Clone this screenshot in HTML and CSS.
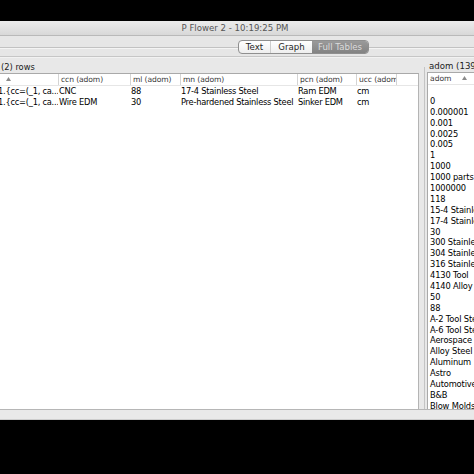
FILE: index.html
```html
<!DOCTYPE html>
<html lang="en">
<head>
  <meta charset="UTF-8">
  <meta name="viewport" content="width=device-width, initial-scale=1.0">
  <title>P Flower 2</title>
  <link rel="stylesheet" href="styles.css">
</head>
<body>
  <div class="window">
    <div class="titlebar">P Flower 2 - 10:19:25 PM</div>

    <div class="toolbar">
      <div class="segmented">
        <span class="seg seg-text">Text</span>
        <span class="seg seg-graph">Graph</span>
        <span class="seg seg-tables active">Full Tables</span>
      </div>
    </div>

    <div class="content">
      <section class="group left-group">
        <div class="group-title">(2) rows</div>
        <div class="table">
          <div class="row head">
            <span class="cell first"><svg class="arrow" width="5" height="4" viewBox="0 0 5 4"><path d="M2.5 0 L5 4 L0 4 Z" fill="#8a8a8a"/></svg></span>
            <span class="cell">ccn (adom)</span>
            <span class="cell">ml (adom)</span>
            <span class="cell">mn (adom)</span>
            <span class="cell">pcn (adom)</span>
            <span class="cell">ucc (adom)</span>
            <span class="cell"></span>
          </div>
          <div class="row">
            <span class="cell first">1.{cc=(_1, ca...</span>
            <span class="cell">CNC</span>
            <span class="cell">88</span>
            <span class="cell">17-4 Stainless Steel</span>
            <span class="cell">Ram EDM</span>
            <span class="cell">cm</span>
            <span class="cell"></span>
          </div>
          <div class="row">
            <span class="cell first">1.{cc=(_1, ca...</span>
            <span class="cell">Wire EDM</span>
            <span class="cell">30</span>
            <span class="cell">Pre-hardened Stainless Steel</span>
            <span class="cell">Sinker EDM</span>
            <span class="cell">cm</span>
            <span class="cell"></span>
          </div>
        </div>
      </section>

      <section class="group right-group">
        <div class="group-title">adom (1391)</div>
        <div class="list">
          <div class="list-head">adom <svg class="arrow" width="5" height="4" viewBox="0 0 5 4"><path d="M2.5 0 L5 4 L0 4 Z" fill="#8a8a8a"/></svg></div>
          <div class="item">&nbsp;</div>
          <div class="item">0</div>
          <div class="item">0.000001</div>
          <div class="item">0.001</div>
          <div class="item">0.0025</div>
          <div class="item">0.005</div>
          <div class="item">1</div>
          <div class="item">1000</div>
          <div class="item">1000 parts</div>
          <div class="item">1000000</div>
          <div class="item">118</div>
          <div class="item">15-4 Stainless</div>
          <div class="item">17-4 Stainless</div>
          <div class="item">30</div>
          <div class="item">300 Stainless</div>
          <div class="item">304 Stainless</div>
          <div class="item">316 Stainless</div>
          <div class="item">4130 Tool</div>
          <div class="item">4140 Alloy</div>
          <div class="item">50</div>
          <div class="item">88</div>
          <div class="item">A-2 Tool Steel</div>
          <div class="item">A-6 Tool Steel</div>
          <div class="item">Aerospace</div>
          <div class="item">Alloy Steel</div>
          <div class="item">Aluminum</div>
          <div class="item">Astro</div>
          <div class="item">Automotive</div>
          <div class="item">B&amp;B</div>
          <div class="item">Blow Molds</div>
          <div class="item">Baby Design</div>
        </div>
      </section>
    </div>

    <div class="statusbar"></div>
  </div>
</body>
</html>
```

FILE: styles.css
```css
html, body {
  margin: 0;
  height: 474px;
  overflow: hidden;
  background: #000;
  font-family: "DejaVu Sans", Verdana, sans-serif;
}

.window {
  margin-top: 21px;
  width: 474px;
  height: 399px;
  display: flex;
  flex-direction: column;
  background: #e8e8e8;
  overflow: hidden;
}

.titlebar {
  height: 15px;
  line-height: 15px;
  padding-right: 4px;
  text-align: center;
  font-size: 8.6px;
  color: #555;
  background: linear-gradient(#ececec, #d8d8d8);
  border-bottom: 1px solid #b9b9b9;
  box-sizing: border-box;
}

.toolbar {
  position: relative;
  height: 21px;
  background: #e6e6e6;
  border-bottom: 1px solid #c6c6c6;
  box-sizing: border-box;
}

/* pane border the segmented control sits on */
.toolbar::before {
  content: "";
  position: absolute;
  left: 0;
  right: 0;
  top: 11px;
  border-top: 1px solid #c2c2c2;
  border-bottom: 1px solid #f4f4f4;
}

.segmented {
  position: relative;
  display: flex;
  margin: 4px 0 0 238px;
  width: 131px;
  height: 14px;
  border: 1px solid #8f8f8f;
  border-radius: 4px;
  box-sizing: border-box;
  overflow: hidden;
  background: linear-gradient(#ffffff, #eeeeee);
}

.seg {
  display: flex;
  align-items: center;
  justify-content: center;
  font-size: 8.6px;
  color: #1e1e1e;
  box-sizing: border-box;
}

.seg-text {
  width: 32px;
  border-right: 1px solid #cdcdcd;
}

.seg-graph {
  width: 41px;
}

.seg-tables {
  flex: 1;
}

.seg.active {
  background: linear-gradient(#9a9a9a, #838383);
  color: #dcdcdc;
}

.content {
  flex: 1;
  display: flex;
  padding-top: 3px;
  border-top: 1px solid #f2f2f2;
  min-height: 0;
}

.group {
  display: flex;
  flex-direction: column;
}

.group-title {
  height: 12px;
  line-height: 12px;
  font-size: 8.3px;
  color: #1a1a1a;
  white-space: nowrap;
}

.left-group {
  width: 419px;
  flex: none;
}

.left-group .group-title {
  padding-left: 1px;
}

.table {
  flex: 1;
  background: #fff;
  border-top: 1px solid #a9a9a9;
  border-right: 1px solid #b4b4b4;
}

.row {
  display: grid;
  grid-template-columns: 58px 72px 50px 117px 59px 40px 1fr;
  height: 10.9px;
  line-height: 10.9px;
  font-size: 8.3px;
  letter-spacing: -0.25px;
  color: #000;
}

.row.head {
  height: 11px;
  line-height: 12px;
  font-size: 7.6px;
  letter-spacing: -0.1px;
  color: #3a3a3a;
  border-bottom: 1px solid #e6e6e6;
}

.cell {
  padding-left: 2px;
  white-space: nowrap;
  overflow: hidden;
}

.row.head .cell + .cell {
  border-left: 1px solid #d4d4d4;
}

.row:not(.head) .cell {
  padding-left: 1px;
}

.row:not(.head) .cell.first {
  text-indent: -2px;
  padding-left: 0;
}

.row.head .cell.first {
  padding-left: 6px;
}

.arrow {
  vertical-align: 1px;
}

.right-group {
  flex: none;
  width: 60px;
  margin-left: 5px;
  border-left: 1px solid #c4c4c4;
  margin-top: 6px;
}

.right-group .group-title {
  margin-top: -7px;
  padding-left: 4px;
  font-size: 8.6px;
  color: #1a1a1a;
}

.list {
  flex: 1;
  margin-left: 2px;
  width: 80px;
  background: #fff;
  border-left: 1px solid #a9a9a9;
  border-top: 1px solid #a9a9a9;
  font-size: 8.3px;
  letter-spacing: -0.15px;
  color: #000;
  overflow: hidden;
}

.list-head {
  height: 11px;
  line-height: 12px;
  padding-left: 2px;
  font-size: 7.6px;
  letter-spacing: 0;
  color: #3a3a3a;
  border-bottom: 1px solid #e6e6e6;
  white-space: nowrap;
}

.list-head .arrow {
  margin-left: 8px;
}

.item {
  height: 10.9px;
  line-height: 10.9px;
  padding-left: 2px;
  white-space: nowrap;
}

.statusbar {
  height: 11px;
  flex: none;
  background: #e9e9e9;
  border-top: 1px solid #b6b6b6;
  border-bottom: 1px solid #cdcdcd;
  box-sizing: border-box;
}
```
